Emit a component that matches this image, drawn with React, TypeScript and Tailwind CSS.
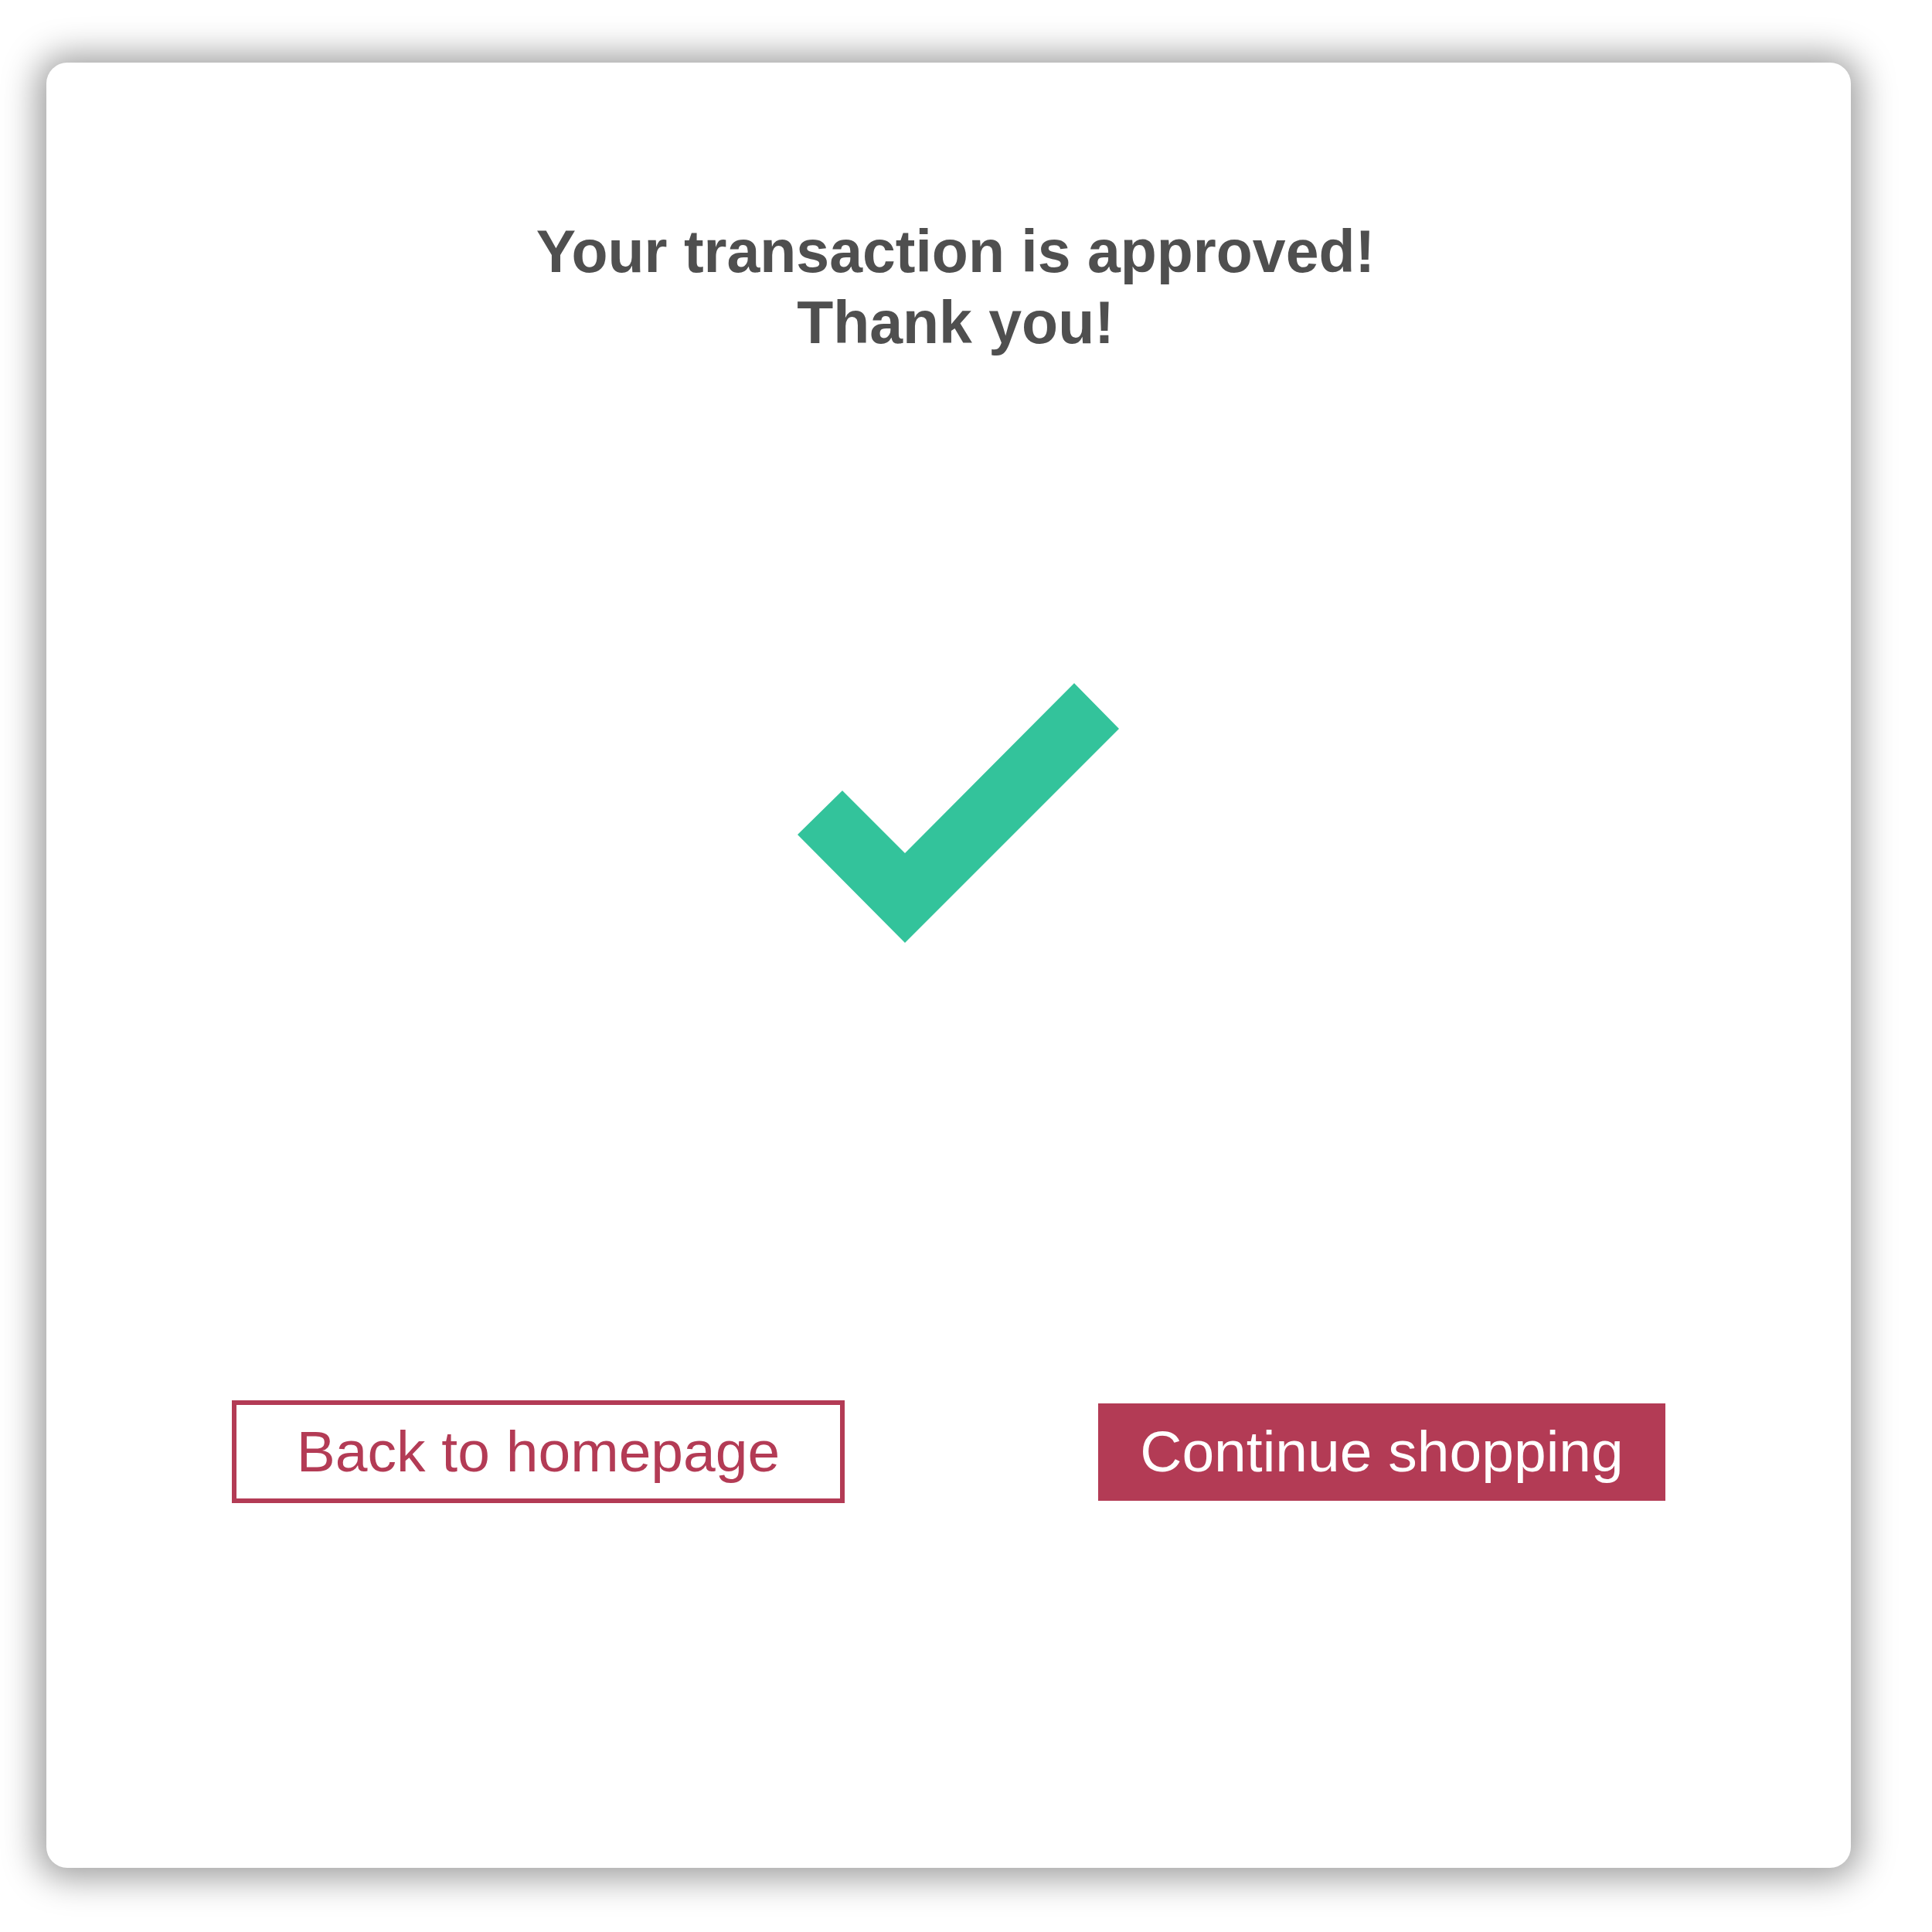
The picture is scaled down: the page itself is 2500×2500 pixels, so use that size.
// big green tick drawn as one polygon
function Tick() {
  return (
    <svg width="416" height="336" viewBox="0 0 416 336" className="ml-[24px]">
      <polygon points="0,196 58,139 139,220 358,0 416,59 139,336" fill="#33c39b" />
    </svg>
  );
}

function App() {
  return (
    <div className="w-[2500px] h-[2500px] bg-white pt-[81px] pl-[60px]" style={{ fontFamily: '"Liberation Sans", Arial, sans-serif' }}>
      <div className="w-[2335px] h-[2336px] bg-white rounded-[27px] shadow-[0_2px_45px_12px_rgba(0,0,0,0.38)] flex flex-col items-center pt-[198px]">
        <h1 className="pl-[18px] text-[77px] leading-[92px] font-bold text-[#4f4f4f] text-center">
          Your transaction is approved!
          <br />
          Thank you!
        </h1>

        <div className="mt-[421px]">
          <Tick />
        </div>

        <div className="mt-[592px] w-full px-[240px] flex justify-between items-center">
          <button className="w-[793px] h-[133px] border-[6px] border-[#b33b55] text-[#b33b55] text-[75px] leading-none flex items-center justify-center">
            Back to homepage
          </button>
          <button className="w-[734px] h-[126px] bg-[#b33b55] text-white text-[75px] leading-none flex items-center justify-center">
            Continue shopping
          </button>
        </div>
      </div>
    </div>
  );
}

export default App;
